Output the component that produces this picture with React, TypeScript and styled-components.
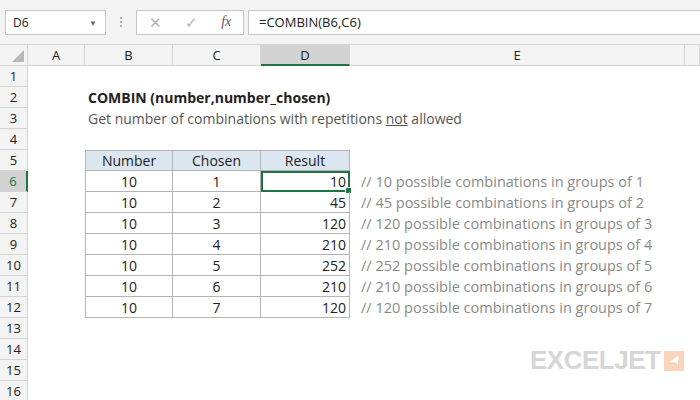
import React from "react";
import styled, { createGlobalStyle } from "styled-components";

const Global = createGlobalStyle`
  html, body { margin: 0; padding: 0; background: #fff; overflow: hidden; }
  body { font-family: "Open Sans", "Noto Sans", sans-serif; }
`;

const Page = styled.div`width: 700px; height: 400px; overflow: hidden; position: relative;`;

const Bar = styled.div`
  height: 45px; background: #f3f3f3; display: flex; align-items: center;
  padding: 0 0 0 5px; gap: 0; box-sizing: border-box; border-bottom: 1px solid #d4d4d4;
`;
const NameBox = styled.div`
  width: 101px; height: 25px; box-sizing: border-box; background: #fff; border: 1px solid #c6c6c6;
  display: flex; align-items: center; justify-content: space-between; padding: 0 8px 0 7px;
  font-size: 12px; color: #222;
`;
const Dots = styled.div`
  width: 30px; display: flex; flex-direction: column; align-items: center; gap: 2px;
  span { width: 2px; height: 2px; background: #b0b0b0; }
`;
const Btns = styled.div`
  width: 108px; height: 25px; box-sizing: border-box; background: #fff; border: 1px solid #c6c6c6;
  display: flex; align-items: center; justify-content: space-around; color: #b5b5b5; font-size: 15px;
`;
const Fx = styled.span`font-family: "Liberation Serif", serif; font-style: italic; color: #555; font-size: 14px;`;
const Arrow = styled.span`font-size: 8px; color: #666;`;
const Formula = styled.div`
  flex: 1; height: 25px; box-sizing: border-box; background: #fff; border: 1px solid #c6c6c6; border-right: none;
  display: flex; align-items: center; padding-left: 10px; font-size: 13px; color: #222; margin-left: 4px;
`;

const Grid = styled.div`
  display: grid; grid-template-columns: 28px 57px 88px 88px 89px 335px 15px;
  grid-auto-rows: 21px;
`;
const ColHead = styled.div<{ $sel?: boolean }>`
  background: ${p => (p.$sel ? "#d2d2d2" : "#f3f3f3")};
  border-right: 1px solid #d4d4d4; border-bottom: ${p => (p.$sel ? "2px solid #217346" : "1px solid #d4d4d4")};
  display: flex; align-items: center; justify-content: center; font-size: 13px; color: #222;
  box-sizing: border-box;
`;
const Corner = styled(ColHead)`
  position: relative;
  &::after { content: ""; position: absolute; right: 3px; bottom: 3px; border-left: 12px solid transparent; border-bottom: 12px solid #b8b8b8; }
`;
const RowHead = styled.div<{ $sel?: boolean }>`
  background: ${p => (p.$sel ? "#d2d2d2" : "#f3f3f3")};
  border-bottom: 1px solid #d4d4d4;
  border-right: ${p => (p.$sel ? "2px solid #217346" : "1px solid #d4d4d4")};
  display: flex; align-items: center; justify-content: center; font-size: 13px; color: ${p => (p.$sel ? "#217346" : "#222")};
  box-sizing: border-box;
`;
const Cell = styled.div<{ $align?: string; $bold?: boolean; $box?: boolean; $head?: boolean; $muted?: boolean; $sub?: boolean; $sel?: boolean; $top?: boolean }>`
  position: relative; box-sizing: border-box; font-size: ${p => (p.$muted ? "14.5px" : "14px")}; white-space: nowrap; overflow: visible;
  display: flex; align-items: center; padding: 0 3px;
  justify-content: ${p => p.$align === "c" ? "center" : p.$align === "r" ? "flex-end" : "flex-start"};
  font-weight: ${p => (p.$bold ? 700 : 400)};
  color: ${p => (p.$muted ? "#8a8a8a" : p.$sub ? "#555" : "#222")};
  background: ${p => (p.$head ? "#dce6f1" : "transparent")};
  ${p => p.$muted && "padding-left: 11px;"}
  ${p => p.$box && "border-right: 1px solid #b4b4b4; border-bottom: 1px solid #b4b4b4;"}
  ${p => p.$top && "border-top: 1px solid #b4b4b4;"}
  ${p => p.$sel && "outline: 2px solid #217346; outline-offset: -2px;"}
  ${p => p.$sel && `&::after { content: ""; position: absolute; right: -3px; bottom: -3px; width: 5px; height: 5px; background: #217346; border: 1px solid #fff; }`}
`;
const TableRowLeft = styled(Cell)`border-left: 1px solid #b4b4b4;`;
const U = styled.span`text-decoration: underline;`;

const Logo = styled.div`
  position: absolute; left: 530px; top: 345px; display: flex; align-items: center; gap: 4px;
  font-family: "Liberation Sans", sans-serif; font-weight: 900; font-size: 26px; letter-spacing: -0.5px; color: #d6d6d6;
`;

const data = [[1, 10], [2, 45], [3, 120], [4, 210], [5, 252], [6, 210], [7, 120]];
const cols = ["A", "B", "C", "D", "E"];

export default function App() {
  const rows: React.ReactNode[] = [];
  for (let r = 1; r <= 17; r++) {
    const cells: React.ReactNode[] = [<RowHead key="h" $sel={r === 6}>{r}</RowHead>];
    const d = r >= 6 && r <= 12 ? data[r - 6] : null;
    cells.push(<Cell key="a" />);
    if (r === 2) {
      cells.push(<Cell key="b" $bold>COMBIN (number,number_chosen)</Cell>, <Cell key="c" />, <Cell key="d" />, <Cell key="e" />);
    } else if (r === 3) {
      cells.push(<Cell key="b" $sub>Get number of combinations with repetitions&nbsp;<U>not</U>&nbsp;allowed</Cell>, <Cell key="c" />, <Cell key="d" />, <Cell key="e" />);
    } else if (r === 5) {
      cells.push(
        <TableRowLeft key="b" $head $box $top $align="c">Number</TableRowLeft>,
        <Cell key="c" $head $box $top $align="c">Chosen</Cell>,
        <Cell key="d" $head $box $top $align="c">Result</Cell>,
        <Cell key="e" />
      );
    } else if (d) {
      cells.push(
        <TableRowLeft key="b" $box $align="c">10</TableRowLeft>,
        <Cell key="c" $box $align="c">{d[0]}</Cell>,
        <Cell key="d" $box $align="r" $sel={r === 6}>{d[1]}</Cell>,
        <Cell key="e" $muted>// {d[1]} possible combinations in groups of {d[0]}</Cell>
      );
    } else {
      cells.push(<Cell key="b" />, <Cell key="c" />, <Cell key="d" />, <Cell key="e" />);
    }
    cells.push(<Cell key="f" />);
    rows.push(<React.Fragment key={r}>{cells}</React.Fragment>);
  }
  return (
    <Page>
      <Global />
      <Bar>
        <NameBox>D6<Arrow>▼</Arrow></NameBox>
        <Dots><span /><span /><span /></Dots>
        <Btns><span>✕</span><span>✓</span><Fx>fx</Fx></Btns>
        <Formula>=COMBIN(B6,C6)</Formula>
      </Bar>
      <Grid>
        <Corner />
        {cols.map(c => <ColHead key={c} $sel={c === "D"}>{c}</ColHead>)}
        <ColHead />
        {rows}
      </Grid>
      <Logo>
        EXCELJET
        <svg width="20" height="20" viewBox="0 0 22 22">
          <rect width="22" height="22" fill="#f8d5bc" />
          <path d="M16 5 L6 12 L14 13 Z M14 13 L16 5 L15 17 Z" fill="#fff" />
        </svg>
      </Logo>
    </Page>
  );
}
